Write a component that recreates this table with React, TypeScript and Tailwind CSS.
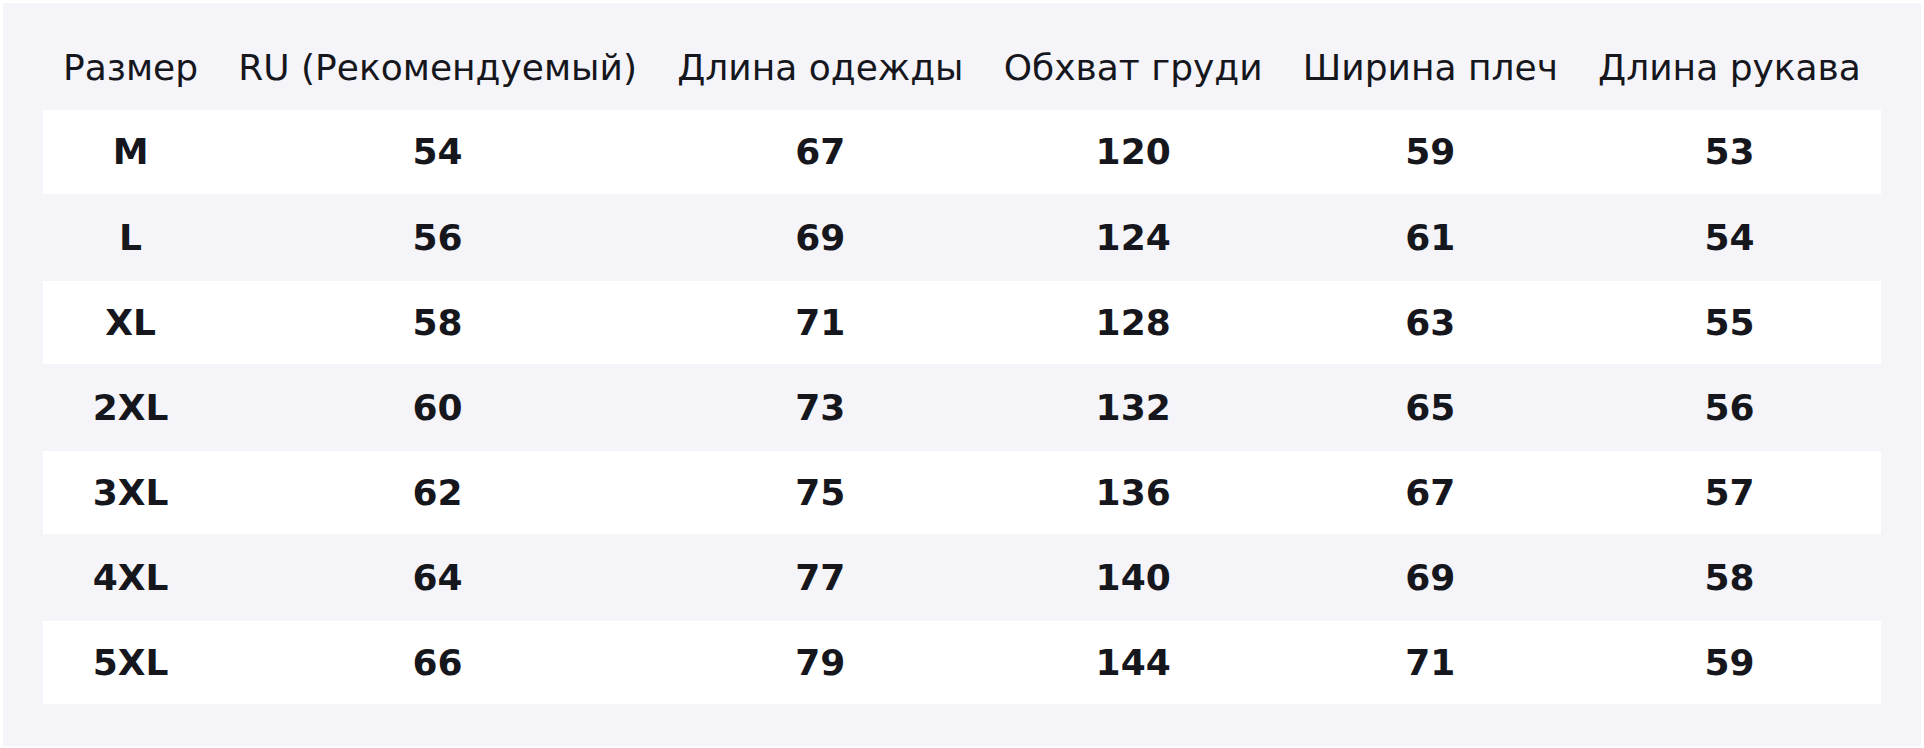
const headers = ['Размер', 'RU (Рекомендуемый)', 'Длина одежды', 'Обхват груди', 'Ширина плеч', 'Длина рукава']

const rows = [
  ['M', '54', '67', '120', '59', '53'],
  ['L', '56', '69', '124', '61', '54'],
  ['XL', '58', '71', '128', '63', '55'],
  ['2XL', '60', '73', '132', '65', '56'],
  ['3XL', '62', '75', '136', '67', '57'],
  ['4XL', '64', '77', '140', '69', '58'],
  ['5XL', '66', '79', '144', '71', '59'],
]

export default function App() {
  return (
    <div className="bg-white p-[3px] font-['DejaVu_Sans',sans-serif] text-[#16161d]">
      <div className="bg-[#f4f4f9] px-[40px] pt-[22px] pb-[40px]">
        <table className="w-full border-collapse">
          <thead>
            <tr className="h-[85px]">
              {headers.map(h => (
                <th key={h} className="px-5 text-center text-[36px] font-normal whitespace-nowrap">{h}</th>
              ))}
            </tr>
          </thead>
          <tbody>
            {rows.map((r, i) => (
              <tr key={r[0]} className={`h-[85px] border-b-2 border-[#f4f4f9] ${i % 2 === 0 ? 'bg-white' : ''}`}>
                {r.map((v, j) => (
                  <td key={j} className="px-5 text-center text-[36px] font-bold whitespace-nowrap">{v}</td>
                ))}
              </tr>
            ))}
          </tbody>
        </table>
      </div>
    </div>
  )
}
